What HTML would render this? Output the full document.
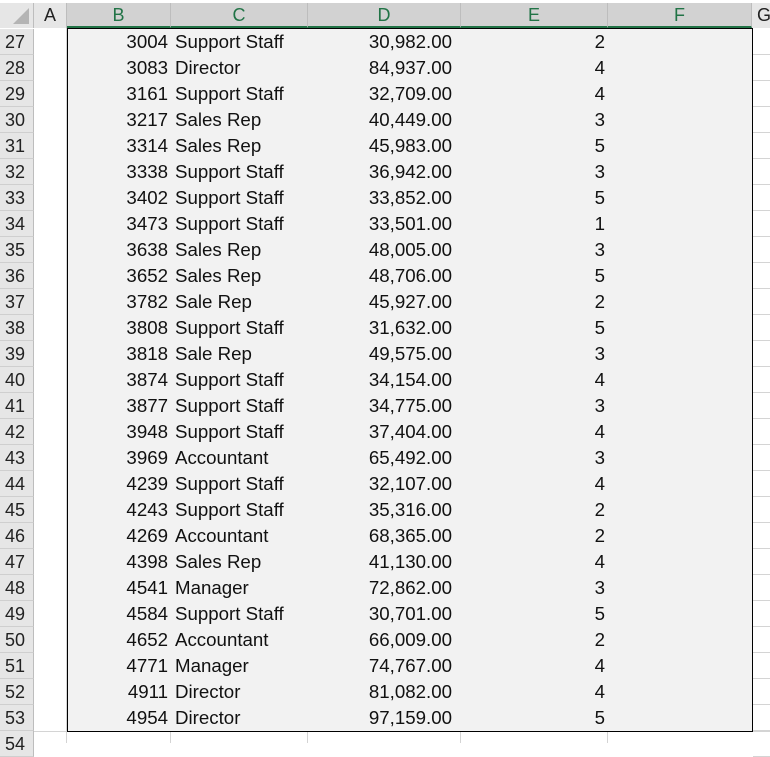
<!DOCTYPE html>
<html><head><style>
body{margin:0;width:770px;height:743px;overflow:hidden;background:#fff;font-family:"Liberation Sans",sans-serif;position:relative}
div{position:absolute;box-sizing:border-box}
.h{top:3px;height:25px;font-size:18px;color:#222;text-align:center;line-height:25px;border-right:1px solid #bdbdbd}
.s{background:#d2d2d2;color:#217346;border-bottom:2px solid #217346}
.rh{left:0;width:34px;height:26px;background:#e6e6e6;border-bottom:1px solid #cfcfcf;border-right:1px solid #bdbdbd;font-size:18px;line-height:26px;padding-left:5px;color:#222}
.c{font-size:18.7px;line-height:26px;height:26px;color:#111;white-space:nowrap}
</style></head><body>
<div style="left:0;top:0;width:770px;height:3px;background:#fff"></div>
<div style="left:0;top:3px;width:770px;height:25px;background:#e6e6e6"></div>
<div class="h" style="left:0;width:34px"><svg width="34" height="25" style="position:absolute;left:0;top:0"><polygon points="29,5 29,21 13,21" fill="#b4b4b4"/></svg></div>
<div class="h" style="left:34px;width:33px">A</div>
<div class="h s" style="left:67px;width:104px">B</div>
<div class="h s" style="left:171px;width:137px">C</div>
<div class="h s" style="left:308px;width:153px">D</div>
<div class="h s" style="left:461px;width:147px">E</div>
<div class="h s" style="left:608px;width:144px">F</div>
<div class="h" style="left:752px;width:30px;text-align:left;padding-left:5px">G</div>
<div style="left:34px;top:28px;width:33px;height:715px;border-right:1px solid #d4d4d4"></div>
<div style="left:34px;top:731px;width:736px;height:12px;border-top:1px solid #d4d4d4"></div>
<div style="left:170px;top:731px;width:1px;height:12px;background:#d4d4d4"></div>
<div style="left:307px;top:731px;width:1px;height:12px;background:#d4d4d4"></div>
<div style="left:460px;top:731px;width:1px;height:12px;background:#d4d4d4"></div>
<div style="left:607px;top:731px;width:1px;height:12px;background:#d4d4d4"></div>
<div style="left:67px;top:28px;width:686px;height:704px;background:#f2f2f2;border:1px solid #000"></div>
<div id="g"></div>
<script>
var d=[[3004,"Support Staff","30,982.00",2],[3083,"Director","84,937.00",4],[3161,"Support Staff","32,709.00",4],[3217,"Sales Rep","40,449.00",3],[3314,"Sales Rep","45,983.00",5],[3338,"Support Staff","36,942.00",3],[3402,"Support Staff","33,852.00",5],[3473,"Support Staff","33,501.00",1],[3638,"Sales Rep","48,005.00",3],[3652,"Sales Rep","48,706.00",5],[3782,"Sale Rep","45,927.00",2],[3808,"Support Staff","31,632.00",5],[3818,"Sale Rep","49,575.00",3],[3874,"Support Staff","34,154.00",4],[3877,"Support Staff","34,775.00",3],[3948,"Support Staff","37,404.00",4],[3969,"Accountant","65,492.00",3],[4239,"Support Staff","32,107.00",4],[4243,"Support Staff","35,316.00",2],[4269,"Accountant","68,365.00",2],[4398,"Sales Rep","41,130.00",4],[4541,"Manager","72,862.00",3],[4584,"Support Staff","30,701.00",5],[4652,"Accountant","66,009.00",2],[4771,"Manager","74,767.00",4],[4911,"Director","81,082.00",4],[4954,"Director","97,159.00",5]];
var h="";
for(var i=0;i<28;i++){var t=29+i*26;
h+='<div class="rh" style="top:'+t+'px">'+(27+i)+'</div>';
h+='<div style="left:753px;top:'+t+'px;width:17px;height:26px;border-bottom:1px solid #d4d4d4"></div>';
if(i<27){var r=d[i];
h+='<div class="c" style="left:67px;top:'+t+'px;width:101px;text-align:right">'+r[0]+'</div>';
h+='<div class="c" style="left:175px;top:'+t+'px">'+r[1]+'</div>';
h+='<div class="c" style="left:308px;top:'+t+'px;width:144px;text-align:right">'+r[2]+'</div>';
h+='<div class="c" style="left:461px;top:'+t+'px;width:144px;text-align:right">'+r[3]+'</div>';}
}
document.getElementById("g").outerHTML=h;
</script>
</body></html>
